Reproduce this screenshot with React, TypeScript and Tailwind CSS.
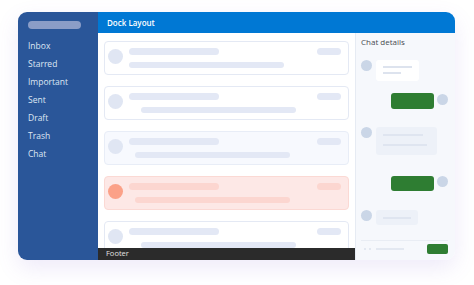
import React from "react";

const navItems = ["Inbox", "Starred", "Important", "Sent", "Draft", "Trash", "Chat"];

type CardProps = {
  indent: number;
  tone?: "plain" | "faded" | "alert";
};

function MailCard({ indent, tone = "plain" }: CardProps) {
  const box =
    tone === "alert"
      ? "bg-[#fde8e6] border-[#fbd9d4]"
      : tone === "faded"
        ? "bg-[#f7f9fe] border-[#e8edf7]"
        : "bg-white border-[#e4e9f4]";
  const dot = tone === "alert" ? "bg-[#fba188]" : "bg-[#e0e6f3]";
  const bar = tone === "alert" ? "bg-[#fcd6d0]" : "bg-[#e3e8f5]";

  return (
    <div className={`flex shrink-0 h-[34px] rounded-[4px] border pl-[3px] pt-[6px] ${box}`}>
      <div className={`w-[15px] h-[15px] rounded-full mt-[1px] ${dot}`} />
      <div className="flex flex-col flex-1 ml-[6px]">
        <div className="flex justify-between pr-[7px]">
          <div className={`w-[90px] h-[7px] rounded-full ${bar}`} />
          <div className={`w-[24px] h-[7px] rounded-full ${bar}`} />
        </div>
        <div
          className={`w-[155px] h-[6px] rounded-full mt-[7px] ${bar} ${
            indent === 12 ? "ml-[12px]" : indent === 6 ? "ml-[6px]" : ""
          }`}
        />
      </div>
    </div>
  );
}

function Avatar() {
  return <div className="w-[11px] h-[11px] rounded-full bg-[#cad6e7] shrink-0" />;
}

export default function App() {
  return (
    <div className="w-[474px] h-[285px] bg-white pl-[18px] pt-[12px] font-['Open_Sans',sans-serif]">
      <div className="flex w-[437px] h-[248px] rounded-[9px] overflow-hidden bg-white shadow-[0_8px_22px_rgba(120,95,210,0.13)]">
        {/* Sidebar */}
        <div className="w-[80px] bg-[#2a5699] flex flex-col pl-[10px] pt-[9px]">
          <div className="w-[53px] h-[8px] rounded-full bg-[#8b9dc7]" />
          <div className="flex flex-col mt-[8px]">
            {navItems.map((item) => (
              <div key={item} className="h-[18px] leading-[18px] text-[8.5px] text-[#dfe7f4]">
                {item}
              </div>
            ))}
          </div>
        </div>

        {/* Content */}
        <div className="flex-1 flex flex-col">
          <div className="h-[21px] bg-[#0078d4] flex items-center pl-[9px] text-[8px] font-semibold text-white">
            Dock Layout
          </div>
          <div className="flex flex-1 min-h-0">
            {/* Mail list */}
            <div className="w-[257px] flex flex-col">
              <div className="flex-1 min-h-0 overflow-hidden flex flex-col gap-[11px] px-[6px] pt-[8px]">
                <MailCard indent={0} />
                <MailCard indent={12} />
                <MailCard indent={6} tone="faded" />
                <MailCard indent={6} tone="alert" />
                <MailCard indent={12} />
              </div>
              <div className="h-[12px] bg-[#2b2b2b] flex items-center pl-[8px] text-[7.5px] text-[#e2e2e2]">
                Footer
              </div>
            </div>

            {/* Chat details */}
            <div className="flex-1 bg-[#f6f8fc] border-l border-[#e6ebf3] flex flex-col pl-[5px] pr-[7px] pt-[3px]">
              <div className="leading-[12px] text-[8px] text-[#474a50]">Chat details</div>

              <div className="flex items-start mt-[12px]">
                <Avatar />
                <div className="ml-[4px] w-[43px] h-[21px] rounded-[3px] bg-white flex flex-col pl-[7px] pt-[6px] gap-[4px]">
                  <div className="w-[29px] h-[2px] bg-[#dde3ee]" />
                  <div className="w-[18px] h-[2px] bg-[#dde3ee]" />
                </div>
              </div>

              <div className="flex items-start justify-end mt-[12px]">
                <div className="w-[43px] h-[16px] rounded-[3px] bg-[#2e7d32]" />
                <div className="ml-[3px] mt-[1px]">
                  <Avatar />
                </div>
              </div>

              <div className="flex items-start mt-[18px]">
                <Avatar />
                <div className="ml-[4px] w-[61px] h-[28px] rounded-[3px] bg-[#edf1f8] flex flex-col pl-[7px] pt-[7px] gap-[8px]">
                  <div className="w-[40px] h-[2px] bg-[#dfe5f0]" />
                  <div className="w-[44px] h-[2px] bg-[#dfe5f0]" />
                </div>
              </div>

              <div className="flex items-start justify-end mt-[21px]">
                <div className="w-[43px] h-[15px] rounded-[3px] bg-[#2e7d32]" />
                <div className="ml-[3px]">
                  <Avatar />
                </div>
              </div>

              <div className="flex items-start mt-[19px]">
                <Avatar />
                <div className="ml-[4px] w-[42px] h-[15px] rounded-[3px] bg-[#edf1f8] flex items-center pl-[7px]">
                  <div className="w-[28px] h-[2px] bg-[#dfe5f0]" />
                </div>
              </div>

              <div className="mt-auto border-t border-[#e9edf4] flex items-center justify-between pt-[3px] pb-[6px] pl-[3px]">
                <div className="flex items-center gap-[3px]">
                  <div className="w-[2px] h-[2px] rounded-full bg-[#dde3ee]" />
                  <div className="w-[2px] h-[2px] rounded-full bg-[#dde3ee]" />
                  <div className="w-[28px] h-[2px] bg-[#e3e8f1] ml-[2px]" />
                </div>
                <div className="w-[21px] h-[10px] rounded-[2px] bg-[#2e7d32]" />
              </div>
            </div>
          </div>
        </div>
      </div>
    </div>
  );
}
